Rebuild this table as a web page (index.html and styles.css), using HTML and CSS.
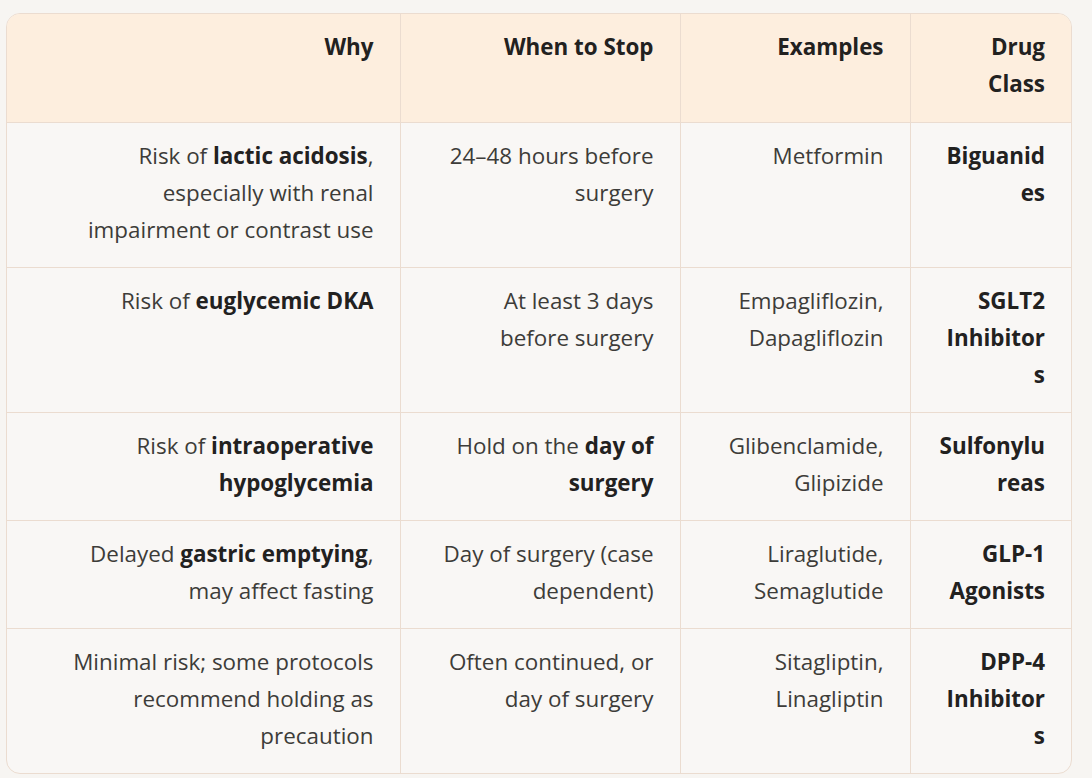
FILE: index.html
```html
<!DOCTYPE html>
<html lang="en">
<head>
<meta charset="utf-8">
<title>Diabetes medications before surgery</title>
<link rel="stylesheet" href="styles.css">
</head>
<body>
<div class="page">
  <div class="table-wrap">
    <table class="med-table">
      <colgroup>
        <col class="c-why">
        <col class="c-when">
        <col class="c-ex">
        <col class="c-class">
      </colgroup>
      <thead>
        <tr>
          <th>Why</th>
          <th>When to Stop</th>
          <th>Examples</th>
          <th class="cell-class">Drug Class</th>
        </tr>
      </thead>
      <tbody>
        <tr>
          <td>Risk of <strong>lactic acidosis</strong>, especially with renal impairment or contrast use</td>
          <td>24–48 hours before surgery</td>
          <td>Metformin</td>
          <td class="cell-class"><strong>Biguanides</strong></td>
        </tr>
        <tr>
          <td>Risk of <strong>euglycemic DKA</strong></td>
          <td>At least 3 days before surgery</td>
          <td>Empagliflozin, Dapagliflozin</td>
          <td class="cell-class"><strong>SGLT2 Inhibitors</strong></td>
        </tr>
        <tr>
          <td>Risk of <strong>intraoperative hypoglycemia</strong></td>
          <td>Hold on the <strong>day of surgery</strong></td>
          <td>Glibenclamide, Glipizide</td>
          <td class="cell-class"><strong>Sulfonylureas</strong></td>
        </tr>
        <tr>
          <td>Delayed <strong>gastric emptying</strong>, may affect fasting</td>
          <td>Day of surgery (case dependent)</td>
          <td>Liraglutide, Semaglutide</td>
          <td class="cell-class"><strong>GLP-1 Agonists</strong></td>
        </tr>
        <tr>
          <td>Minimal risk; some protocols recommend holding as precaution</td>
          <td>Often continued, or day of surgery</td>
          <td>Sitagliptin, Linagliptin</td>
          <td class="cell-class"><strong>DPP-4 Inhibitors</strong></td>
        </tr>
      </tbody>
    </table>
  </div>
</div>
</body>
</html>
```

FILE: styles.css
```css
html, body {
  margin: 0;
  padding: 0;
  background: #f7f5f2;
}

.page {
  padding: 13px 20px 0 6px;
  font-family: "Open Sans", "Noto Sans", sans-serif;
  font-size: 22.4px;
  line-height: 37px;
  color: #3d3c39;
}

.table-wrap {
  box-sizing: border-box;
  width: 1066px;
  border: 1px solid #ebdcd0;
  border-radius: 14px;
  overflow: hidden;
  background: #f9f7f5;
}

.med-table {
  width: 100%;
  border-collapse: collapse;
  table-layout: fixed;
}

.c-why { width: 393px; }
.c-when { width: 280px; }
.c-ex { width: 230px; }
.c-class { width: 161px; }

.med-table th,
.med-table td {
  text-align: right;
  vertical-align: top;
  padding: 14px 26px 19px 40px;
  border-right: 1px solid #ebdcd0;
  border-bottom: 1px solid #ebdcd0;
  overflow-wrap: anywhere;
}

.med-table th {
  padding-bottom: 20px;
  background: #fdeede;
  font-weight: 700;
  color: #22211f;
}

.med-table .cell-class {
  padding-left: 27px;
}

.med-table th:last-child,
.med-table td:last-child {
  border-right: none;
}

.med-table tbody tr:last-child td {
  border-bottom: none;
}

.med-table strong {
  font-weight: 700;
  color: #22211f;
}
```
